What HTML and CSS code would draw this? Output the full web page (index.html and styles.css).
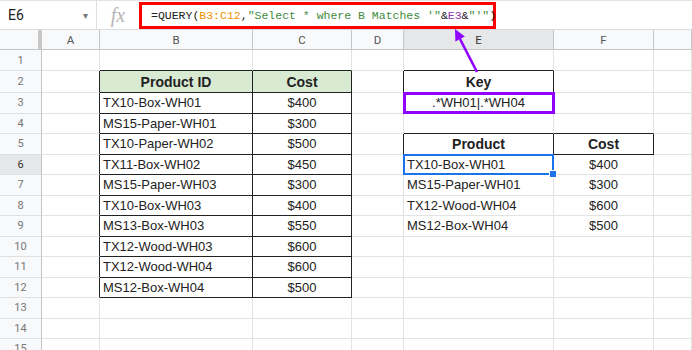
FILE: index.html
```html
<!DOCTYPE html>
<html lang="en">
<head>
    <meta charset="UTF-8">
    <meta name="viewport" content="width=device-width, initial-scale=1.0">
    <title>QUERY Matches</title>
    <link rel="stylesheet" href="styles.css">
</head>
<body>
    <div class="formula-bar">
        <div class="name-box"><span>E6</span><span class="caret">&#9662;</span></div>
        <div class="fx">fx</div>
        <div class="formula"><span>=QUERY(</span><span class="ref">B3:C12</span><span>,</span><span class="str">"Select * where B Matches '"</span><span>&amp;</span><span class="ref2">E3</span><span>&amp;</span><span class="str">"'"</span><span>)</span></div>
    </div>

    <table class="sheet">
        <colgroup>
            <col style="width:42px"><col style="width:58px"><col style="width:153px"><col style="width:99px">
            <col style="width:52px"><col style="width:150px"><col style="width:100px"><col>
        </colgroup>
        <tr class="heads">
            <th class="corner"></th><th>A</th><th>B</th><th>C</th><th>D</th><th class="picked">E</th><th>F</th><th></th>
        </tr>
        <tr class="r r1">
            <th>1</th><td></td><td class="bb"></td><td class="bb"></td><td></td><td class="bb"></td><td></td><td></td>
        </tr>
        <tr class="r r2">
            <th>2</th><td class="rb"></td><td class="bx hd c">Product ID</td><td class="bx hd c">Cost</td><td class="rb"></td><td class="bx kh c">Key</td><td></td><td></td>
        </tr>
        <tr class="r">
            <th>3</th><td class="rb"></td><td class="bx">TX10-Box-WH01</td><td class="bx c">$400</td><td class="rb"></td><td class="bx c key">.*WH01|.*WH04</td><td></td><td></td>
        </tr>
        <tr class="r">
            <th>4</th><td class="rb"></td><td class="bx">MS15-Paper-WH01</td><td class="bx c">$300</td><td></td><td class="bb"></td><td class="bb"></td><td></td>
        </tr>
        <tr class="r">
            <th>5</th><td class="rb"></td><td class="bx">TX10-Paper-WH02</td><td class="bx c">$500</td><td class="rb"></td><td class="bx kh c">Product</td><td class="bx kh c">Cost</td><td></td>
        </tr>
        <tr class="r">
            <th class="picked">6</th><td class="rb"></td><td class="bx">TX11-Box-WH02</td><td class="bx c">$450</td><td></td><td class="sel">TX10-Box-WH01</td><td class="c">$400</td><td></td>
        </tr>
        <tr class="r">
            <th>7</th><td class="rb"></td><td class="bx">MS15-Paper-WH03</td><td class="bx c">$300</td><td></td><td>MS15-Paper-WH01</td><td class="c">$300</td><td></td>
        </tr>
        <tr class="r">
            <th>8</th><td class="rb"></td><td class="bx">TX10-Box-WH03</td><td class="bx c">$400</td><td></td><td>TX12-Wood-WH04</td><td class="c">$600</td><td></td>
        </tr>
        <tr class="r">
            <th>9</th><td class="rb"></td><td class="bx">MS13-Box-WH03</td><td class="bx c">$550</td><td></td><td>MS12-Box-WH04</td><td class="c">$500</td><td></td>
        </tr>
        <tr class="r">
            <th>10</th><td class="rb"></td><td class="bx">TX12-Wood-WH03</td><td class="bx c">$600</td><td></td><td></td><td></td><td></td>
        </tr>
        <tr class="r">
            <th>11</th><td class="rb"></td><td class="bx">TX12-Wood-WH04</td><td class="bx c">$600</td><td></td><td></td><td></td><td></td>
        </tr>
        <tr class="r">
            <th>12</th><td class="rb"></td><td class="bx">MS12-Box-WH04</td><td class="bx c">$500</td><td></td><td></td><td></td><td></td>
        </tr>
        <tr class="r">
            <th>13</th><td></td><td></td><td></td><td></td><td></td><td></td><td></td>
        </tr>
        <tr class="r">
            <th>14</th><td></td><td></td><td></td><td></td><td></td><td></td><td></td>
        </tr>
        <tr class="r">
            <th>15</th><td></td><td></td><td></td><td></td><td></td><td></td><td></td>
        </tr>
    </table>

    <!-- annotation arrow from the key cell up to the formula -->
    <svg class="arrow" width="692" height="350" viewBox="0 0 692 350">
        <line x1="477" y1="72" x2="460" y2="39" stroke="#8f00ff" stroke-width="2.6"/>
        <polygon points="455,29 464.8,36.6 455.4,41.4" fill="#8f00ff"/>
    </svg>
</body>
</html>
```

FILE: styles.css
```css
body {
    margin: 0;
    width: 692px;
    height: 350px;
    overflow: hidden;
    background-color: #fff;
    font-family: "Liberation Sans", Arial, sans-serif;
    color: #222;
    position: relative;
}

/* formula bar */
.formula-bar {
    display: flex;
    align-items: center;
    height: 28px;
    border-top: 1px solid #e3e3e3;
    border-bottom: 1px solid #dadce0;
}

.name-box {
    width: 97px;
    height: 100%;
    box-sizing: border-box;
    display: flex;
    align-items: center;
    justify-content: space-between;
    padding: 0 8px 0 8px;
    border-right: 1px solid #e0e0e0;
    font-family: Roboto, "Liberation Sans", sans-serif;
    font-size: 14px;
}

.caret {
    color: #777;
    font-size: 10px;
}

.fx {
    width: 42px;
    text-align: center;
    font-family: "Liberation Serif", serif;
    font-style: italic;
    font-size: 20px;
    color: #b5b5b5;
    box-sizing: border-box;
}

.formula {
    width: 357px;
    height: 27px;
    box-sizing: border-box;
    border: 3px solid #f00;
    padding-left: 9px;
    display: flex;
    align-items: center;
    white-space: pre;
    font-family: "Liberation Mono", "DejaVu Sans Mono", monospace;
    font-size: 11.5px;
    color: #222;
}

.formula .ref { color: #f09000; }
.formula .ref2 { color: #8e3bb0; }
.formula .str { color: #3d8b3d; }

/* sheet grid */
.sheet {
    border-collapse: separate;
    border-spacing: 0;
    table-layout: fixed;
    width: 692px;
}

.sheet th,
.sheet td {
    box-sizing: border-box;
    padding: 0 3px;
    border-right: 1px solid #e2e3e3;
    border-bottom: 1px solid #e2e3e3;
    white-space: nowrap;
    overflow: visible;
}

.heads {
    height: 20px;
}

.heads th {
    background-color: #f8f9fa;
    border-right: 1px solid #c6c6c6;
    border-bottom: 1px solid #c6c6c6;
    font-family: Roboto, "Liberation Sans", sans-serif;
    font-weight: normal;
    font-size: 11.5px;
    color: #555;
}

.heads th.corner {
    border-right: 4px solid #c8c8c8;
}

.r {
    height: 20.5px;
}

.r1 { height: 21px; }
.r2 { height: 22px; }

.r th {
    background-color: #f8f9fa;
    border-right: 1px solid #c6c6c6;
    border-bottom: 1px solid #e0e0e0;
    font-family: Roboto, "Liberation Sans", sans-serif;
    font-weight: normal;
    font-size: 11px;
    color: #777;
}

.sheet th.picked {
    background-color: #e6e7e9;
    color: #333;
}

.r td {
    font-size: 13px;
}

.c {
    text-align: center;
}

/* bordered tables */
.sheet td.bx {
    border-right: 1px solid #222;
    border-bottom: 1px solid #222;
}

.sheet td.rb {
    border-right: 1px solid #222;
}

.sheet td.bb {
    border-bottom: 1px solid #222;
}

.hd {
    background-color: #d9ead3;
    font-weight: bold;
    font-size: 14px !important;
}

.kh {
    font-weight: bold;
    font-size: 14px !important;
}

.key {
    position: relative;
}

.key::after {
    content: "";
    position: absolute;
    left: -1px;
    top: -1px;
    right: -2px;
    bottom: -1px;
    border: 3px solid #8f00ff;
}

.sel {
    position: relative;
}

.sel::before {
    content: "";
    position: absolute;
    left: -1px;
    top: -1px;
    right: -1px;
    bottom: -1px;
    border: 2px solid #1a73e8;
}

.sel::after {
    content: "";
    position: absolute;
    right: -4px;
    bottom: -4px;
    width: 6px;
    height: 6px;
    background-color: #1a73e8;
    border: 1px solid #fff;
}

.arrow {
    position: absolute;
    left: 0;
    top: 0;
    pointer-events: none;
}
```
